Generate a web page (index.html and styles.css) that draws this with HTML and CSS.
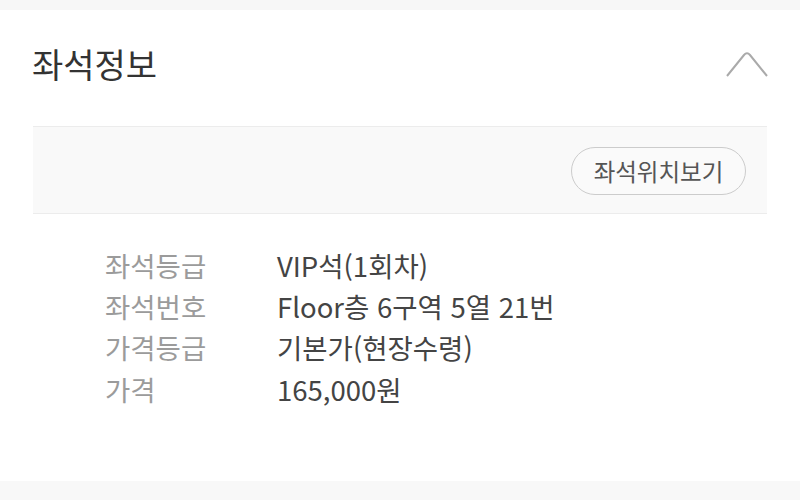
FILE: index.html
```html
<!DOCTYPE html>
<html lang="ko">
<head>
<meta charset="utf-8">
<link rel="stylesheet" href="styles.css">
</head>
<body>
<div class="top-band"></div>
<section class="panel">
  <div class="panel-head">
    <h2 class="title">좌석정보</h2>
    <svg class="chevron" width="42" height="26" viewBox="0 0 42 26">
      <path d="M1 24 L18 3 Q21 -0.5 24 3 L41 24" fill="none" stroke="#aaaaaa" stroke-width="2"/>
    </svg>
  </div>
  <div class="action-bar">
    <button class="seat-btn">좌석위치보기</button>
  </div>
  <dl class="info">
    <div class="row"><dt>좌석등급</dt><dd>VIP석(1회차)</dd></div>
    <div class="row"><dt>좌석번호</dt><dd>Floor층 6구역 5열 21번</dd></div>
    <div class="row"><dt>가격등급</dt><dd>기본가(현장수령)</dd></div>
    <div class="row"><dt>가격</dt><dd>165,000원</dd></div>
  </dl>
</section>
<div class="bottom-band"></div>
</body>
</html>
```

FILE: styles.css
```css
html, body {
  margin: 0;
  padding: 0;
  background: #ffffff;
  font-family: "Noto Sans CJK KR", "Noto Sans", sans-serif;
  width: 800px;
  height: 500px;
  overflow: hidden;
}
.top-band {
  height: 10px;
  background: #f7f7f7;
}
.panel {
  height: 471px;
  padding: 0 33px;
  background: #ffffff;
}
.panel-head {
  height: 116px;
  display: flex;
  align-items: center;
  justify-content: space-between;
  border-bottom: 1px solid #ececec;
}
.title {
  margin: -8px 0 0 -1px;
  font-size: 34px;
  font-weight: 400;
  color: #333333;
  line-height: 1;
}
.chevron {
  display: block;
  margin-right: -1px;
  margin-top: -6px;
}
.action-bar {
  height: 86px;
  background: #f9f9f9;
  border-bottom: 1px solid #ececec;
  display: flex;
  align-items: center;
  justify-content: flex-end;
  padding-right: 21px;
}
.seat-btn {
  height: 48px;
  width: 175px;
  border: 1px solid #cccccc;
  border-radius: 24px;
  background: #fafafa;
  font-family: "Noto Sans CJK KR", "Noto Sans", sans-serif;
  font-size: 23.5px;
  color: #555555;
  padding: 0;
  margin-top: 1px;
}
.info {
  margin: 0;
  padding: 30px 0 0 72px;
}
.row {
  display: flex;
  height: 41.3px;
  align-items: center;
  font-size: 27.5px;
}
.row dt {
  width: 172px;
  color: #9b9b9b;
}
.row dd {
  margin: 0;
  color: #444444;
}
.bottom-band {
  height: 19px;
  background: #f8f8f8;
}
```
